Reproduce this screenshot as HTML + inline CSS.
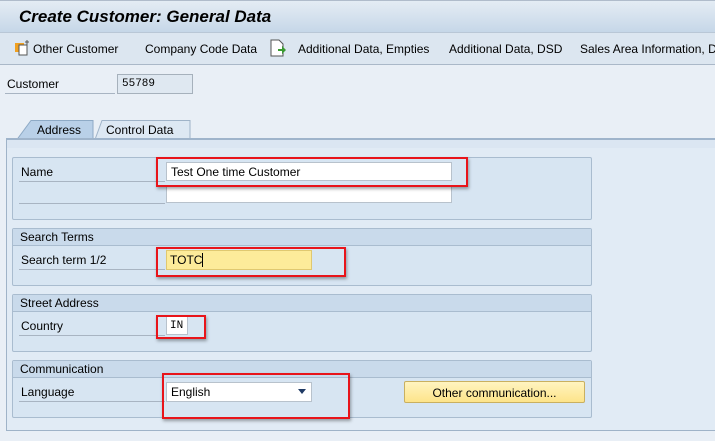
<!DOCTYPE html>
<html><head><style>
*{margin:0;padding:0;box-sizing:border-box}
body{width:715px;height:441px;overflow:hidden;background:#e9eff6;font-family:"Liberation Sans",Tahoma,sans-serif;font-size:12px;color:#000;position:relative}
.a{position:absolute}
#title{left:0;top:0;width:715px;height:32px;background:linear-gradient(#e4ecf4,#c6d7e8);border-top:1px solid #b0bccb}
#title span{position:absolute;left:19px;top:6px;font-size:17px;font-weight:bold;font-style:italic;color:#000}
#tb{left:0;top:32px;width:715px;height:33px;background:#dce6f0;border-top:1px solid #b9c7d6;border-bottom:1px solid #aab8c8}
#tb span{position:absolute;top:9px;white-space:nowrap}
.lbl{border-bottom:1px solid #a8b4c2}
.fld{background:#fff;border:1px solid #b8c2cc;height:19px;padding:2px 4px}
.grp{background:#d7e5f2;border:1px solid #a9bccf;border-radius:2px}
.hdr{background:#c9daeb;border-bottom:1px solid #a9bccf;height:17px;padding:1px 7px}
.red{border:2px solid #e8141a;box-shadow:1px 2px 3px rgba(0,0,0,.35)}
</style></head><body>
<div id="title" class="a"><span>Create Customer: General Data</span></div>
<div id="tb" class="a">
<svg class="a" style="left:15px;top:7px" width="16" height="16"><rect x="0" y="3" width="9" height="9" fill="#f0a020"/><rect x="4" y="5" width="8" height="10" fill="#fff" stroke="#555"/><path d="M12 0v5M10 2h4" stroke="#555"/></svg>
<span style="left:33px">Other Customer</span>
<span style="left:145px">Company Code Data</span>
<svg class="a" style="left:270px;top:6px" width="16" height="18"><path d="M1 1h8l4 4v12H1z" fill="#fff" stroke="#555"/><path d="M8 10h4V7l4 4-4 4v-3H8z" fill="#3a9a30"/></svg>
<span style="left:298px">Additional Data, Empties</span>
<span style="left:449px">Additional Data, DSD</span>
<span style="left:580px">Sales Area Information, D</span>
</div>
<div class="a lbl" style="left:5px;top:77px;width:110px;height:17px;padding-left:2px">Customer</div>
<div class="a" style="left:117px;top:74px;width:76px;height:20px;background:#dfe8f1;border:1px solid #a6b1bc;font-family:'Liberation Mono',monospace;font-size:11px;padding:3px 4px">55789</div>
<!-- tabs -->
<svg class="a" style="left:14px;top:119px" width="180" height="21">
<path d="M3 20.5L17 1.5h62v19z" fill="#b9d0e8" stroke="#8eaac6"/>
<path d="M81 20.5L88 1.5h88v19z" fill="#dde8f3" stroke="#9fb3c8"/>
</svg>
<div class="a" style="left:37px;top:123px">Address</div>
<div class="a" style="left:106px;top:123px">Control Data</div>
<div class="a" style="left:6px;top:138px;width:712px;height:293px;background:#e1ebf5;border:1px solid #9fb3c8;border-top:2px solid #9fb4cb"></div>
<div class="a" style="left:7px;top:140px;width:710px;height:8px;background:#dbe6f2"></div>
<!-- Name group -->
<div class="a grp" style="left:12px;top:157px;width:580px;height:63px"></div>
<div class="a lbl" style="left:19px;top:165px;width:146px;height:17px;padding-left:2px">Name</div>
<div class="a lbl" style="left:19px;top:187px;width:146px;height:17px"></div>
<div class="a fld" style="left:166px;top:162px;width:286px">Test One time Customer</div>
<div class="a fld" style="left:166px;top:185px;width:286px;height:18px"></div>
<div class="a red" style="left:156px;top:157px;width:312px;height:30px"></div>
<!-- Search Terms -->
<div class="a grp" style="left:12px;top:228px;width:580px;height:58px"><div class="hdr">Search Terms</div></div>
<div class="a lbl" style="left:19px;top:253px;width:146px;height:17px;padding-left:2px">Search term 1/2</div>
<div class="a" style="left:166px;top:250px;width:146px;height:20px;background:#fdeb9a;border:1px solid #e0c870;padding:2px 3px">TOTC<span style="border-left:1px solid #000;margin-left:0"></span></div>
<div class="a red" style="left:156px;top:247px;width:190px;height:30px"></div>
<!-- Street Address -->
<div class="a grp" style="left:12px;top:294px;width:580px;height:58px"><div class="hdr">Street Address</div></div>
<div class="a lbl" style="left:19px;top:319px;width:146px;height:17px;padding-left:2px">Country</div>
<div class="a fld" style="left:166px;top:316px;width:22px;font-family:'Liberation Mono',monospace;font-size:11px;padding:3px 3px">IN</div>
<div class="a red" style="left:156px;top:315px;width:50px;height:24px"></div>
<!-- Communication -->
<div class="a grp" style="left:12px;top:360px;width:580px;height:58px"><div class="hdr">Communication</div></div>
<div class="a lbl" style="left:19px;top:385px;width:146px;height:17px;padding-left:2px">Language</div>
<div class="a fld" style="left:166px;top:382px;width:146px;height:20px">English</div>
<div class="a" style="left:298px;top:389px;width:0;height:0;border-left:4px solid transparent;border-right:4px solid transparent;border-top:5px solid #1f3a64"></div>
<div class="a red" style="left:162px;top:373px;width:188px;height:46px"></div>
<div class="a" style="left:404px;top:381px;width:181px;height:22px;background:linear-gradient(#fff4c0,#fde48a);border:1px solid #c9b060;border-radius:2px;text-align:center;padding-top:4px">Other communication...</div>
</body></html>
